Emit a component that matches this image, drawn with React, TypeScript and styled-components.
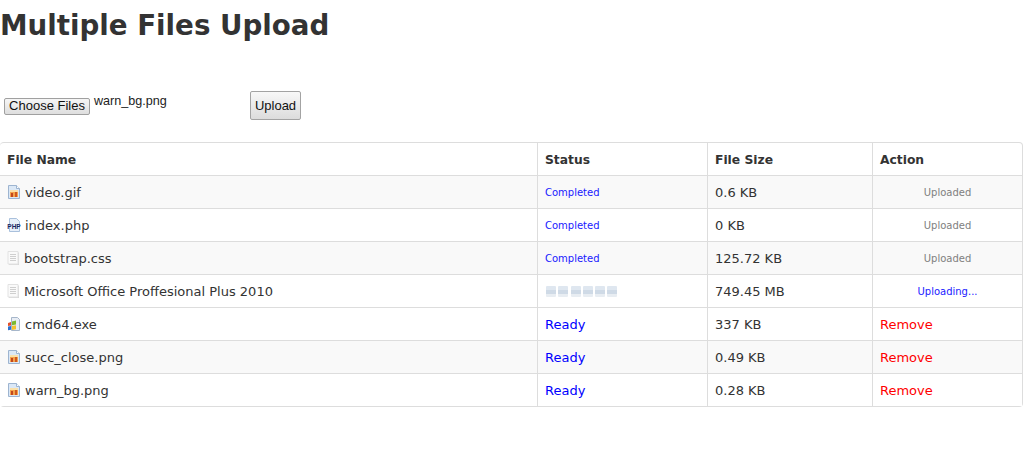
import React from "react";
import styled, { createGlobalStyle } from "styled-components";

const GlobalStyle = createGlobalStyle`
	html, body {
		margin: 0;
		padding: 0;
		background: #fff;
	}
	body {
		font-family: "DejaVu Sans", Verdana, sans-serif;
		color: #333;
	}
`;

const Page = styled.div`
	width: 1023px;
`;

const Title = styled.h1`
	margin: 0;
	padding-top: 8px;
	height: 91px;
	box-sizing: border-box;
	font-size: 27.7px;
	line-height: 36px;
	font-weight: 700;
	color: #333;
`;

const UploadForm = styled.form`
	display: flex;
	align-items: flex-start;
	height: 51px;
	padding-left: 4px;
	font-family: "Liberation Sans", Arial, sans-serif;
`;

const ChooseButton = styled.button`
	width: 86px;
	height: 17px;
	margin-top: 7px;
	padding: 0 0 2px;
	box-sizing: border-box;
	border: 1px solid #a0a0a0;
	border-radius: 2px;
	background: linear-gradient(#f6f6f6, #dedede);
	font-family: inherit;
	font-size: 13px;
	line-height: 13px;
	color: #111;
`;

const ChosenName = styled.span`
	width: 160px;
	margin-top: 3px;
	padding-left: 4px;
	box-sizing: border-box;
	font-size: 12.6px;
	line-height: 14px;
	color: #222;
`;

const UploadButton = styled.button`
	width: 51px;
	height: 29px;
	padding: 0;
	box-sizing: border-box;
	border: 1px solid #a3a3a3;
	border-radius: 2px;
	background: linear-gradient(#f8f8f8, #dcdcdc);
	font-family: inherit;
	font-size: 13px;
	color: #111;
`;

const FilesTable = styled.table`
	width: 1023px;
	table-layout: fixed;
	border-collapse: separate;
	border-spacing: 0;
	border: 1px solid #ddd;
	border-left: 0;
	border-radius: 4px;
	font-size: 13px;
`;

const HeadCell = styled.th`
	height: 32px;
	padding: 1px 0 0 7px;
	box-sizing: border-box;
	text-align: left;
	font-size: 12.3px;
	font-weight: 700;
	color: #333;
	& + & {
		border-left: 1px solid #ddd;
	}
`;

const Row = styled.tr<{ $striped: boolean }>`
	background: ${(p) => (p.$striped ? "#f9f9f9" : "#fff")};
`;

const Cell = styled.td<{ $center?: boolean }>`
	height: 33px;
	padding: 0 0 0 ${(p) => (p.$center ? 0 : 7)}px;
	box-sizing: border-box;
	border-top: 1px solid #ddd;
	color: #333;
	white-space: nowrap;
	text-align: ${(p) => (p.$center ? "center" : "left")};
	& + & {
		border-left: 1px solid #ddd;
	}
`;

const FileCell = styled.div`
	display: flex;
	align-items: center;
	gap: 4px;
`;

const SmallBlue = styled.span`
	position: relative;
	top: -1px;
	font-size: 10px;
	color: #1a1aff;
`;

const SmallGrey = styled.span`
	position: relative;
	top: -1px;
	font-size: 10px;
	color: #808080;
`;

const Ready = styled.span`
	color: #0000ff;
`;

const Remove = styled.span`
	color: #ff0000;
`;

const Progress = styled.div`
	display: flex;
	gap: 2.3px;
	margin-left: 1px;
`;

const ProgressBlock = styled.span`
	width: 10px;
	height: 11px;
	border-radius: 1px;
	background: linear-gradient(#dfe7f0 0 40%, #cfdae6 40% 75%, #e8edf2 75%);
`;

type IconKind = "image" | "php" | "text" | "exe";

function ImageIcon() {
	return (
		<svg width="14" height="16" viewBox="0 0 14 16">
			<path d="M1.5 1.5h8l3 3v10h-11z" fill="#dbe8f6" stroke="#9db4d0" />
			<path d="M9.5 1.5v3h3" fill="#fff" stroke="#9db4d0" />
			<rect x="3" y="6" width="8" height="7" fill="#f3a24a" />
			<rect x="3" y="6" width="8" height="2" fill="#fbe0a8" />
			<rect x="4" y="9" width="2" height="4" fill="#c2461f" />
			<rect x="8" y="8" width="2" height="5" fill="#d0581f" />
		</svg>
	);
}

function PhpIcon() {
	return (
		<svg width="14" height="16" viewBox="0 0 14 16">
			<path d="M2.5 1.5h7l3 3v10h-10z" fill="#e8f0fa" stroke="#a9c0dc" />
			<text x="7" y="11.5" textAnchor="middle" fontFamily="Liberation Sans" fontSize="6.5" fontWeight="700" fill="#16265f">
				PHP
			</text>
		</svg>
	);
}

function TextIcon() {
	return (
		<svg width="13" height="16" viewBox="0 0 13 16">
			<path d="M2 2.5h10v12.5h-10z" fill="#d8d8d8" />
			<path d="M1 1.5h10v12.5h-10z" fill="#fafafa" stroke="#e2e2e2" />
			<path d="M3 4.5h6M3 6.5h6M3 8.5h6M3 10.5h6" stroke="#cfcfcf" />
		</svg>
	);
}

function ExeIcon() {
	return (
		<svg width="14" height="16" viewBox="0 0 14 16">
			<path d="M4.5 1.5h6l2 2v11h-8z" fill="#e8edf4" stroke="#a6b6ca" />
			<path d="M1 7l3-1v3.5l-3 .5z" fill="#e2502a" />
			<path d="M5 5.5l4-1v4l-4 .7z" fill="#7cba2e" />
			<path d="M1 10.6l3-.5v3.6l-3 .5z" fill="#2b6fd0" />
			<path d="M5 10l4-.7v4l-4 .6z" fill="#f4c22c" />
		</svg>
	);
}

const icons: Record<IconKind, React.ReactNode> = {
	image: <ImageIcon />,
	php: <PhpIcon />,
	text: <TextIcon />,
	exe: <ExeIcon />,
};

const rows: { name: string; icon: IconKind; size: string; state: "done" | "busy" | "ready"; striped: boolean }[] = [
	{ name: "video.gif", icon: "image", size: "0.6 KB", state: "done", striped: true },
	{ name: "index.php", icon: "php", size: "0 KB", state: "done", striped: false },
	{ name: "bootstrap.css", icon: "text", size: "125.72 KB", state: "done", striped: true },
	{ name: "Microsoft Office Proffesional Plus 2010", icon: "text", size: "749.45 MB", state: "busy", striped: false },
	{ name: "cmd64.exe", icon: "exe", size: "337 KB", state: "ready", striped: false },
	{ name: "succ_close.png", icon: "image", size: "0.49 KB", state: "ready", striped: true },
	{ name: "warn_bg.png", icon: "image", size: "0.28 KB", state: "ready", striped: false },
];

export default function App() {
	return (
		<Page>
			<GlobalStyle />
			<Title>Multiple Files Upload</Title>
			<UploadForm>
				<ChooseButton type="button">Choose Files</ChooseButton>
				<ChosenName>warn_bg.png</ChosenName>
				<UploadButton type="button">Upload</UploadButton>
			</UploadForm>
			<FilesTable>
				<colgroup>
					<col style={{ width: 537 }} />
					<col style={{ width: 170 }} />
					<col style={{ width: 165 }} />
					<col />
				</colgroup>
				<thead>
					<tr>
						<HeadCell>File Name</HeadCell>
						<HeadCell>Status</HeadCell>
						<HeadCell>File Size</HeadCell>
						<HeadCell>Action</HeadCell>
					</tr>
				</thead>
				<tbody>
					{rows.map((row) => (
						<Row key={row.name} $striped={row.striped}>
							<Cell>
								<FileCell>
									{icons[row.icon]}
									{row.name}
								</FileCell>
							</Cell>
							<Cell>
								{row.state === "done" && <SmallBlue>Completed</SmallBlue>}
								{row.state === "ready" && <Ready>Ready</Ready>}
								{row.state === "busy" && (
									<Progress>
										{[0, 1, 2, 3, 4, 5].map((n) => (
											<ProgressBlock key={n} />
										))}
									</Progress>
								)}
							</Cell>
							<Cell>{row.size}</Cell>
							<Cell $center={row.state !== "ready"}>
								{row.state === "done" && <SmallGrey>Uploaded</SmallGrey>}
								{row.state === "busy" && <SmallBlue>Uploading...</SmallBlue>}
								{row.state === "ready" && <Remove>Remove</Remove>}
							</Cell>
						</Row>
					))}
				</tbody>
			</FilesTable>
		</Page>
	);
}
